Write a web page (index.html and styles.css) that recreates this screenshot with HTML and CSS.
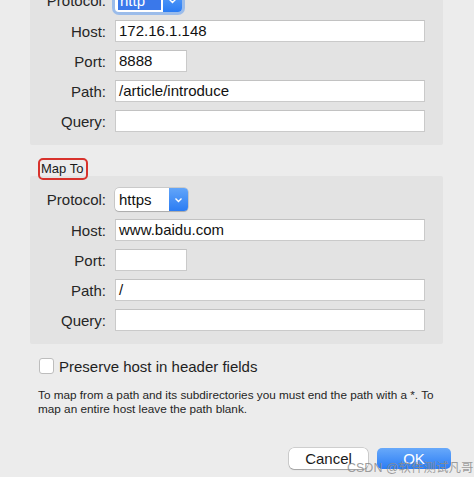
FILE: index.html
```html
<!DOCTYPE html>
<html>
<head>
<meta charset="utf-8">
<link rel="stylesheet" href="styles.css">
</head>
<body>
<div class="page">
  <section class="box">
    <div class="row row-popup">
      <span class="label">Protocol:</span>
      <div class="popup popup-http popup-focus">
        <span class="popup-text selected">http</span>
        <span class="popup-arrow"><svg width="9" height="6" viewBox="0 0 9 6"><polyline points="1.5,1.5 4.5,4.5 7.5,1.5" fill="none" stroke="#fff" stroke-width="1.4"/></svg></span>
      </div>
    </div>
    <div class="row"><span class="label">Host:</span><div class="field">172.16.1.148</div></div>
    <div class="row"><span class="label">Port:</span><div class="field field-short">8888</div></div>
    <div class="row"><span class="label">Path:</span><div class="field">/article/introduce</div></div>
    <div class="row"><span class="label">Query:</span><div class="field"></div></div>
  </section>

  <div class="mapto">Map To</div>

  <section class="box">
    <div class="row row-popup">
      <span class="label">Protocol:</span>
      <div class="popup popup-https">
        <span class="popup-text">https</span>
        <span class="popup-arrow"><svg width="9" height="6" viewBox="0 0 9 6"><polyline points="1.5,1.5 4.5,4.5 7.5,1.5" fill="none" stroke="#fff" stroke-width="1.4"/></svg></span>
      </div>
    </div>
    <div class="row"><span class="label">Host:</span><div class="field">www.baidu.com</div></div>
    <div class="row"><span class="label">Port:</span><div class="field field-short"></div></div>
    <div class="row"><span class="label">Path:</span><div class="field">/</div></div>
    <div class="row"><span class="label">Query:</span><div class="field"></div></div>
  </section>

  <label class="check-row"><span class="checkbox"></span><span>Preserve host in header fields</span></label>

  <p class="note">To map from a path and its subdirectories you must end the path with a *. To map an entire host leave the path blank.</p>

  <div class="actions">
    <button class="btn btn-cancel">Cancel</button>
    <button class="btn btn-ok">OK</button>
  </div>
</div>
<div class="watermark">CSDN @软件测试凡哥</div>
</body>
</html>
```

FILE: styles.css
```css
html, body {
  margin: 0;
  padding: 0;
}
body {
  width: 474px;
  height: 477px;
  overflow: hidden;
  position: relative;
  background: #ececec;
  font-family: "Liberation Sans", Arial, sans-serif;
  color: #1f1f1f;
}
.page {
  margin-top: -23px;
  padding-left: 30px;
}
.box {
  width: 413px;
  box-sizing: border-box;
  background: #e3e3e3;
  padding: 12px 18px 13px 0;
  display: flex;
  flex-direction: column;
  gap: 8px;
  border-radius: 2px;
}
.row {
  display: flex;
  align-items: center;
  height: 22px;
}
.row-popup {
  height: 23px;
}
.label {
  width: 76px;
  margin-right: 9px;
  text-align: right;
  font-size: 15px;
  color: #262626;
}
.field {
  flex: 1;
  height: 22px;
  box-sizing: border-box;
  background: #fff;
  border: 1px solid #cacaca;
  border-top-color: #c2c2c2;
  font-size: 15px;
  line-height: 20px;
  padding-left: 3px;
  color: #111;
}
.field-short {
  flex: none;
  width: 72px;
}
.popup {
  display: flex;
  height: 23px;
  box-sizing: border-box;
  border-radius: 4px;
  background: #fff;
  overflow: hidden;
  box-shadow: 0 0 0 0.5px rgba(0,0,0,0.22), 0 1px 1px rgba(0,0,0,0.15);
}
.popup-focus {
  box-shadow: 0 0 0 3px rgba(96,156,240,0.55);
}
.popup-http { width: 67px; }
.popup-https { width: 73px; }
.popup-text {
  flex: 1;
  font-size: 15px;
  line-height: 23px;
  padding-left: 4px;
  color: #111;
}
.popup-text.selected {
  background: #3a78ea;
  color: #fff;
  margin: 2px 2px 2px 3px;
  padding-left: 2px;
  line-height: 19px;
}
.popup-arrow {
  width: 19px;
  display: flex;
  align-items: center;
  justify-content: center;
  background: linear-gradient(#62a5f9, #2b7cf3);
}
.mapto {
  width: fit-content;
  box-sizing: border-box;
  height: 22px;
  margin: 13px 0 -4px 8px;
  padding: 0 3px 0 1px;
  border: 2px solid #d8322c;
  border-radius: 5px;
  font-size: 13px;
  line-height: 18px;
  color: #1a1a1a;
  position: relative;
  z-index: 1;
}
.check-row {
  display: flex;
  align-items: center;
  gap: 5px;
  height: 18px;
  margin: 13px 0 0 9px;
  font-size: 15px;
  color: #1f1f1f;
}
.checkbox {
  width: 15px;
  height: 16px;
  box-sizing: border-box;
  background: #fff;
  border: 1px solid #bdbdbd;
  border-radius: 3px;
}
.note {
  margin: 13px 0 0 8px;
  width: 400px;
  font-size: 11.75px;
  line-height: 14px;
  color: #1f1f1f;
}
.actions {
  display: flex;
  justify-content: flex-end;
  gap: 9px;
  margin-top: 32px;
  padding-right: 23px;
}
.btn {
  height: 21px;
  box-sizing: border-box;
  border: none;
  border-radius: 5px;
  font-family: "Liberation Sans", Arial, sans-serif;
  font-size: 15px;
  line-height: 21px;
  padding: 0;
}
.btn-cancel {
  width: 79px;
  background: #fff;
  color: #1a1a1a;
  box-shadow: 0 0 0 0.5px rgba(0,0,0,0.25), 0 1px 1px rgba(0,0,0,0.2);
}
.btn-ok {
  width: 74px;
  background: linear-gradient(#68a9fa, #2b7df5);
  color: #fff;
}
.watermark {
  position: absolute;
  left: 347px;
  top: 457px;
  font-size: 12.5px;
  font-family: "Liberation Sans", "Noto Sans CJK SC", sans-serif;
  color: rgba(140,140,140,0.85);
  white-space: nowrap;
}
```
